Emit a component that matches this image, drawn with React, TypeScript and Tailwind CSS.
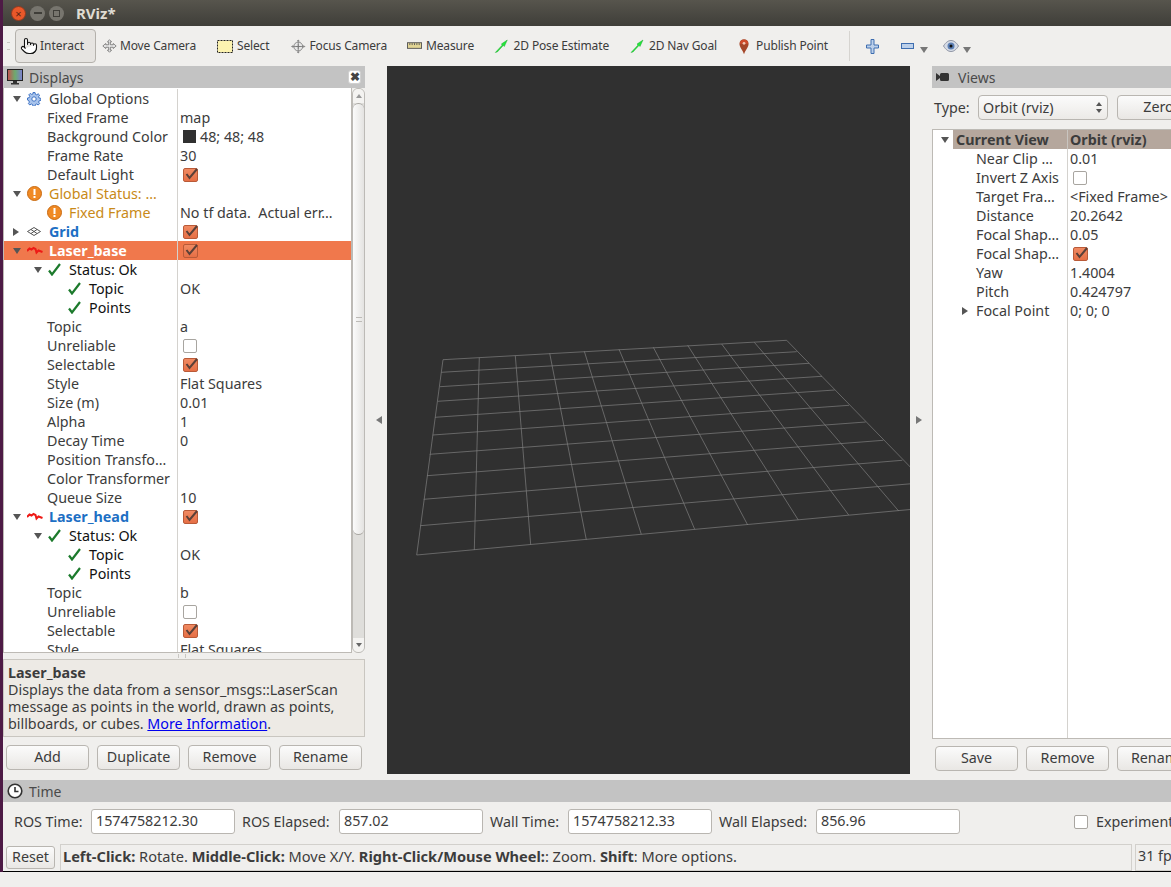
import { Pointer } from 'lucide-react'
import type { ReactNode } from 'react'

const font = "[font-family:'Noto_Sans',sans-serif]"

// measured corners of the grid lines, in canvas coordinates
const topEdge = [[56, 293.7], [92.3, 291.7], [128.3, 289.7], [162.7, 287.3], [197.3, 285.3], [232, 283.3], [266.3, 281.3], [300.7, 279.3], [334.7, 278], [367.3, 276.3], [399.7, 274.3]]
const bottomEdge = [[29.7, 489], [87.3, 484], [143.7, 478.7], [199.3, 473.7], [254.3, 468.3], [307.7, 463.3], [360.7, 459], [411.3, 454], [461.7, 449], [511.7, 445], [561.3, 440]]
const leftEdge = [[56, 293.7], [54.3, 306.3], [53, 320.7], [50.7, 335.3], [48, 351.3], [45.7, 369], [42.7, 388.3], [40, 409.7], [36.7, 433.3], [33.3, 459.7], [29.7, 489]]
const rightEdge = [[399.7, 274.3], [409.7, 285.7], [422, 297.3], [435, 310.3], [447.7, 324], [462, 339.3], [478.7, 356], [496.3, 374.3], [515.3, 394.3], [536.3, 416.7], [561.3, 440]]

function GridLines() {
  return (
    <svg viewBox="0 0 523 708" className="w-full h-full block" fill="none" stroke="#808080" strokeWidth="0.7">
      {topEdge.map((p, i) => (
        <line key={i} x1={p[0]} y1={p[1]} x2={bottomEdge[i][0]} y2={bottomEdge[i][1]} />
      ))}
      {leftEdge.map((p, i) => (
        <line key={i} x1={p[0]} y1={p[1]} x2={rightEdge[i][0]} y2={rightEdge[i][1]} />
      ))}
    </svg>
  )
}

const MoveIcon = () => (
  <svg width="18" height="16" viewBox="0 0 18 16" fill="#e8e8e8" stroke="#666" strokeWidth="0.9">
    <path d="M9 .5l2.5 2.5H10v3.5h3.5V5L17 8l-3.5 3V9.5H10V13h1.500L9 15.500 6.500 13H8V9.500H4.500V11L1 8l3.500-3v1.500H8V3H6.500z" />
  </svg>
)
const SelectIcon = () => (
  <svg width="16" height="13" viewBox="0 0 16 13">
    <rect x=".5" y=".5" width="15" height="12" fill="#fdf3b0" stroke="#222" strokeDasharray="2 1" />
  </svg>
)
const FocusIcon = () => (
  <svg width="17" height="17" viewBox="0 0 18 18" fill="none" stroke="#777" strokeWidth="1">
    <circle cx="9" cy="9" r="5.500" fill="#e6e6e6" />
    <path d="M9 1v16M1 9h16M6 9h6M9 6v6" />
    <path d="M7.500 2.500L9 1l1.500 1.500M7.500 15.500L9 17l1.500-1.500M2.500 7.500L1 9l1.500 1.500M15.500 7.500L17 9l-1.500 1.500" />
  </svg>
)
const RulerIcon = () => (
  <svg width="16" height="8" viewBox="0 0 16 8">
    <rect x=".5" y=".5" width="15" height="6" fill="#e2d595" stroke="#555" />
    <path d="M3 1v2M5.500 1v2M8 1v2M10.500 1v2M13 1v2" stroke="#555" />
  </svg>
)
const ArrowGreen = () => (
  <svg width="15" height="14" viewBox="0 0 14 14">
    <path d="M1 13.500L8 6l-1-1 6-4-3 6.500-1-1L3 13z" fill="#22e83a" stroke="#0d9b1f" strokeWidth=".4" />
  </svg>
)
const PinIcon = () => (
  <svg width="11" height="17" viewBox="0 0 11 17">
    <path d="M5.500 17C4 12 .5 9.500.5 5.500a5 5 0 0110 0C10.500 9.500 7 12 5.500 17z" fill="#a5472a" />
    <path d="M5.500 1a4.500 4.500 0 014.500 4.500H1A4.500 4.500 0 015.500 1z" fill="#cf4c2c" />
    <circle cx="5.500" cy="5" r="1.500" fill="#f3c9b5" />
  </svg>
)
const PlusIcon = () => (
  <svg width="13" height="15" viewBox="0 0 13 15">
    <path d="M5 .5h3v5.500h4.500v3H8v5.500H5V9H.5V6H5z" fill="#bcd0ea" stroke="#3f6eb0" />
  </svg>
)
const MinusIcon = () => (
  <svg width="13" height="6" viewBox="0 0 13 6">
    <rect x=".5" y=".5" width="12" height="5" fill="#bcd0ea" stroke="#3f6eb0" />
  </svg>
)
const EyeIcon = () => (
  <svg width="16" height="12" viewBox="0 0 16 12">
    <path d="M.5 6C3 2 5.500.5 8 .5S13 2 15.500 6C13 10 10.500 11.500 8 11.500S3 10 .5 6z" fill="#d5dbe6" stroke="#8d93a3" />
    <circle cx="8" cy="6" r="3.500" fill="#5c7fb5" />
    <circle cx="8" cy="6" r="1.500" fill="#111" />
  </svg>
)
const Caret = () => (
  <svg width="8" height="6" viewBox="0 0 8 6" className="mt-2"><path d="M0 0h8L4 6z" fill="#777" /></svg>
)
const MonitorIcon = () => (
  <svg width="16" height="16" viewBox="0 0 16 16">
    <defs>
      <linearGradient id="scr" x1="0" x2="1" y1="0" y2="0">
        <stop offset="0" stopColor="#c65050" />
        <stop offset=".5" stopColor="#6dab6d" />
        <stop offset="1" stopColor="#7d7dd6" />
      </linearGradient>
    </defs>
    <rect x=".5" y=".5" width="15" height="11" fill="url(#scr)" stroke="#222" />
    <path d="M6 12h4v2h2v1.500H4V14h2z" fill="#333" />
  </svg>
)
const GearIcon = () => (
  <svg width="14" height="14" viewBox="0 0 14 14" fill="#a9c4ec" stroke="#3f73c4" strokeWidth="1">
    <path d="M6 .5h2l.4 1.800 1.300.5 1.500-1 1.400 1.400-1 1.500.5 1.300 1.800.4v2l-1.800.4-.5 1.300 1 1.500-1.400 1.400-1.500-1-1.300.5-.4 1.800H6l-.4-1.800-1.300-.5-1.500 1-1.400-1.400 1-1.500-.5-1.300L.5 8V6l1.800-.4.500-1.300-1-1.500 1.400-1.400 1.500 1 1.300-.5z" />
    <circle cx="7" cy="7" r="2.200" fill="#fff" />
  </svg>
)
const WarnIcon = () => (
  <svg width="15" height="15" viewBox="0 0 15 15">
    <circle cx="7.500" cy="7.500" r="7" fill="#f08a24" stroke="#c96a10" />
    <rect x="6.500" y="3" width="2" height="6" fill="#fff" />
    <rect x="6.500" y="10" width="2" height="2" fill="#fff" />
  </svg>
)
const GridIcon = () => (
  <svg width="14" height="9" viewBox="0 0 14 9" fill="none" stroke="#444" strokeWidth=".9">
    <path d="M7 .5L13.500 4.500 7 8.500.5 4.500zM4 2.500L10 6.500M10 2.500L4 6.500" />
  </svg>
)
const LaserIcon = () => (
  <svg width="16" height="9" viewBox="0 0 16 9" fill="none" stroke="#ee1a16" strokeWidth="2">
    <path d="M0 5l2.500-2.500 2 1 2-1.500 2 1 1 3.500 2-2 4 1.500" />
  </svg>
)
const CheckIcon = () => (
  <svg width="13" height="13" viewBox="0 0 13 13" fill="none" stroke="#1c7a2c" strokeWidth="2.200">
    <path d="M1 7.500l3 4L12 1" />
  </svg>
)
const CameraIcon = () => (
  <svg width="13" height="8" viewBox="0 0 13 8">
    <path d="M0 0l4 3V1.500A1.500 1.500 0 015.500 0h6A1.500 1.500 0 0113 1.500v5A1.500 1.500 0 0111.500 8h-6A1.500 1.500 0 014 6.500V5l-4 3z" fill="#333" />
  </svg>
)
const ClockIcon = () => (
  <svg width="16" height="16" viewBox="0 0 16 16" fill="#fff" stroke="#333" strokeWidth="1.600">
    <circle cx="8" cy="8" r="6.800" />
    <path d="M8 4v4.500h3.500" fill="none" />
  </svg>
)
const Down = () => (
  <svg width="8" height="6" viewBox="0 0 8 6"><path d="M0 0h8L4 6z" fill="#555" /></svg>
)
const Right = () => (
  <svg width="6" height="8" viewBox="0 0 6 8"><path d="M0 0l6 4-6 4z" fill="#555" /></svg>
)

function Check({ on }: { on: boolean }) {
  return on ? (
    <span className="block w-[15px] h-[14px] rounded-[2px] bg-linear-to-b from-[#f08a62] to-[#e66f45] border border-[#b95a38]">
      <svg width="15" height="14" viewBox="0 0 15 14" fill="none" stroke="#5a4038" strokeWidth="2" className="block -mt-[2px]">
        <path d="M2.500 7l3 4L13 2" />
      </svg>
    </span>
  ) : (
    <span className="block w-[14px] h-[14px] rounded-[2px] bg-white border border-[#a8a5a0]" />
  )
}

type Row = {
  name: string
  indent: string
  arrow?: 'down' | 'right'
  icon?: ReactNode
  iconBox?: string
  value?: string
  check?: boolean
  tone?: string
  selected?: boolean
}

const TOP = 'pl-[8px]'
const D1 = 'pl-[43px]'
const D1A = 'pl-[29px]'
const D2 = 'pl-[64px]'
const statusTone = 'text-[#111111]'
const warnTone = 'text-[#c98a18]'
const blue = 'text-[#1d6fc4] font-bold'

function laserRows(topic: string, okValue: string): Row[] {
  return [
    { name: 'Status: Ok', indent: D1A, arrow: 'down', icon: <CheckIcon />, iconBox: 'w-[21px]', tone: statusTone },
    { name: 'Topic', indent: D2, icon: <CheckIcon />, iconBox: 'w-[21px]', tone: statusTone, value: okValue },
    { name: 'Points', indent: D2, icon: <CheckIcon />, iconBox: 'w-[21px]', tone: statusTone },
    { name: 'Topic', indent: D1, value: topic },
    { name: 'Unreliable', indent: D1, check: false },
    { name: 'Selectable', indent: D1, check: true },
    { name: 'Style', indent: D1, value: 'Flat Squares' },
  ]
}

const displayRows: Row[] = [
  { name: 'Global Options', indent: TOP, arrow: 'down', icon: <GearIcon />, iconBox: 'w-[22px]' },
  { name: 'Fixed Frame', indent: D1, value: 'map' },
  { name: 'Background Color', indent: D1, value: '48; 48; 48' },
  { name: 'Frame Rate', indent: D1, value: '30' },
  { name: 'Default Light', indent: D1, check: true },
  { name: 'Global Status: …', indent: TOP, arrow: 'down', icon: <WarnIcon />, iconBox: 'w-[22px]', tone: warnTone },
  { name: 'Fixed Frame', indent: D1, icon: <WarnIcon />, iconBox: 'w-[22px]', tone: warnTone, value: 'No tf data.  Actual err…' },
  { name: 'Grid', indent: TOP, arrow: 'right', icon: <GridIcon />, iconBox: 'w-[22px]', tone: blue, check: true },
  { name: 'Laser_base', indent: TOP, arrow: 'down', icon: <LaserIcon />, iconBox: 'w-[22px]', tone: 'text-white font-bold', check: true, selected: true },
  ...laserRows('a', 'OK'),
  { name: 'Size (m)', indent: D1, value: '0.01' },
  { name: 'Alpha', indent: D1, value: '1' },
  { name: 'Decay Time', indent: D1, value: '0' },
  { name: 'Position Transfo…', indent: D1 },
  { name: 'Color Transformer', indent: D1 },
  { name: 'Queue Size', indent: D1, value: '10' },
  { name: 'Laser_head', indent: TOP, arrow: 'down', icon: <LaserIcon />, iconBox: 'w-[22px]', tone: blue, check: true },
  ...laserRows('b', 'OK'),
]

const viewRows: Row[] = [
  { name: 'Near Clip …', indent: D1, value: '0.01' },
  { name: 'Invert Z Axis', indent: D1, check: false },
  { name: 'Target Fra…', indent: D1, value: '<Fixed Frame>' },
  { name: 'Distance', indent: D1, value: '20.2642' },
  { name: 'Focal Shap…', indent: D1, value: '0.05' },
  { name: 'Focal Shap…', indent: D1, check: true },
  { name: 'Yaw', indent: D1, value: '1.4004' },
  { name: 'Pitch', indent: D1, value: '0.424797' },
  { name: 'Focal Point', indent: 'pl-[28px]', arrow: 'right', value: '0; 0; 0' },
]

function TreeRow({ row, nameWidth }: { row: Row; nameWidth: string }) {
  return (
    <div className={`flex h-[19px] shrink-0 items-center leading-[19px] ${row.selected ? 'bg-[#f0784c]' : ''}`}>
      <div className={`${nameWidth} h-full flex items-center whitespace-pre border-r border-[#d4d2ce] ${row.indent} ${row.tone ?? 'text-[#3c3c3c]'}`}>
        {row.arrow && (
          <span className="w-[15px] flex items-center pl-[1px]">{row.arrow === 'down' ? <Down /> : <Right />}</span>
        )}
        {row.icon && <span className={`${row.iconBox} flex items-center`}>{row.icon}</span>}
        <span>{row.name}</span>
      </div>
      <div className="flex-1 pl-[2px] flex items-center whitespace-pre text-[#3c3c3c]">
        {row.name === 'Background Color' && <span className="w-[13px] h-[13px] bg-[#303030] ml-[3px] mr-[4px]" />}
        {row.check !== undefined && <span className="ml-[3px]"><Check on={row.check} /></span>}
        {row.value}
      </div>
    </div>
  )
}

function PushButton({ label, width }: { label: string; width: string }) {
  return (
    <button className={`${width} h-[25px] shrink-0 rounded-[4px] border border-[#b9b6b1] bg-linear-to-b from-[#fbfbfb] to-[#e9e7e4] text-[#3c3c3c] text-[14.300px] leading-none`}>
      {label}
    </button>
  )
}

function DockTitle({ icon, title, children }: { icon: ReactNode; title: string; children?: ReactNode }) {
  return (
    <div className="h-[22px] shrink-0 bg-[#c3c3c3] flex items-center pl-[4px] text-[14px] text-[#4a4a4a]">
      <span className="w-[22px] flex items-center">{icon}</span>
      <span>{title}</span>
      {children}
    </div>
  )
}

function ToolItem({ icon, label, className }: { icon: ReactNode; label: string; className: string }) {
  return (
    <div className={`flex items-center whitespace-nowrap text-[12px] tracking-[-0.15px] text-[#3c3c3c] ${className}`}>
      {icon}
      <span>{label}</span>
    </div>
  )
}

function TimeField({ label, value, labelClass }: { label: string; value: string; labelClass: string }) {
  return (
    <>
      <span className={`${labelClass} shrink-0 whitespace-nowrap`}>{label}</span>
      <span className="w-[144px] h-[25px] shrink-0 rounded-[3px] border border-[#b9b6b1] bg-white pl-[4px] leading-[22px] text-[#3c3c3c]">
        {value}
      </span>
    </>
  )
}

export default function App() {
  return (
    <div className={`${font} w-[1171px] h-[887px] overflow-hidden flex bg-[#f0efed] text-[14.300px]`}>
      <div className="w-[3px] h-[872px] bg-[#4d1a45] shrink-0" />
      <div className="w-[1168px] shrink-0 flex flex-col">
        {/* title bar */}
        <div className="h-[26px] shrink-0 bg-linear-to-b from-[#57554d] to-[#3f3e39] flex items-center pl-[8px]">
          <span className="w-[15px] h-[15px] rounded-full bg-[#e9582a] border border-[#8f3a20] flex items-center justify-center text-[11px] leading-none text-[#5c2412]">×</span>
          <span className="w-[15px] h-[15px] ml-[4px] rounded-full bg-[#77756e] flex items-center justify-center">
            <span className="w-[8px] h-[2px] bg-[#3f3e39]" />
          </span>
          <span className="w-[15px] h-[15px] ml-[4px] rounded-full bg-[#77756e] flex items-center justify-center">
            <span className="w-[7px] h-[7px] border border-[#3f3e39]" />
          </span>
          <span className="ml-[12px] text-[15px] font-bold text-[#dfdbd2]">RViz*</span>
        </div>

        {/* toolbar */}
        <div className="h-[40px] shrink-0 flex items-center">
          <div className="w-[3px] h-[8px] ml-[4px] border-y border-[#c9c7c3]" />
          <div className="w-[81px] h-[34px] ml-[5px] rounded-[4px] border border-[#b4b1ac] bg-[#e6e4e1] flex items-center pl-[4px] text-[12px] text-[#3c3c3c]">
            <Pointer size={18} strokeWidth={1.500} fill="#fff" color="#111" />
            <span className="ml-[2px]">Interact</span>
          </div>
          <div className="w-[6px]" />
          <ToolItem className="w-[94px] shrink-0 gap-[3px]" icon={<MoveIcon />} label="Move Camera" />
          <div className="w-[21px]" />
          <ToolItem className="w-[53px] shrink-0 gap-[4px]" icon={<SelectIcon />} label="Select" />
          <div className="w-[21px]" />
          <ToolItem className="w-[96px] shrink-0 gap-[4px]" icon={<FocusIcon />} label="Focus Camera" />
          <div className="w-[20px]" />
          <ToolItem className="w-[67px] shrink-0 gap-[4px]" icon={<RulerIcon />} label="Measure" />
          <div className="w-[20px]" />
          <ToolItem className="w-[115px] shrink-0 gap-[5px]" icon={<ArrowGreen />} label="2D Pose Estimate" />
          <div className="w-[21px]" />
          <ToolItem className="w-[87px] shrink-0 gap-[5px]" icon={<ArrowGreen />} label="2D Nav Goal" />
          <div className="w-[22px]" />
          <ToolItem className="w-[89px] shrink-0 gap-[7px]" icon={<PinIcon />} label="Publish Point" />
          <div className="w-px h-[30px] ml-[21px] bg-[#d6d4d0]" />
          <div className="ml-[16px] flex items-center"><PlusIcon /></div>
          <div className="ml-[22px] flex items-center"><MinusIcon /></div>
          <div className="ml-[6px] flex items-center"><Caret /></div>
          <div className="ml-[15px] flex items-center"><EyeIcon /></div>
          <div className="ml-[4px] flex items-center"><Caret /></div>
        </div>

        {/* main area */}
        <div className="h-[708px] shrink-0 flex">
          <div className="w-[362px] shrink-0 flex flex-col">
            <DockTitle icon={<MonitorIcon />} title="Displays">
              <span className="ml-auto mr-[4px] w-[13px] h-[14px] rounded-[3px] bg-white border border-[#d0d0d0] flex items-center justify-center text-[12px] font-bold leading-none text-[#444]">✖</span>
            </DockTitle>
            <div className="h-[565px] shrink-0 flex">
              <div className="w-[349px] shrink-0 overflow-hidden flex flex-col bg-white border-l border-r border-b border-[#bdbab5] pt-px">
                {displayRows.map((row, i) => (
                  <TreeRow key={i} row={row} nameWidth="w-[174px]" />
                ))}
              </div>
              <div className="w-[13px] shrink-0 flex flex-col items-center rounded-[6px] border border-[#bcbab6] bg-[#dfdedb] overflow-hidden">
                <span className="w-full h-[14px] shrink-0 bg-[#f4f3f1] flex items-center justify-center">
                  <svg width="6" height="4" viewBox="0 0 6 4"><path d="M0 4h6L3 0z" fill="#999" /></svg>
                </span>
                <span className="w-full h-[432px] shrink-0 rounded-[6px] bg-linear-to-r from-[#fbfbfb] to-[#e4e3e1] border-y border-[#a9a7a3] flex items-center justify-center">
                  <span className="w-[6px] h-[5px] border-y border-[#bdbbb7]" />
                </span>
                <span className="flex-1" />
                <span className="w-full h-[14px] shrink-0 bg-[#f4f3f1] flex items-center justify-center">
                  <svg width="6" height="4" viewBox="0 0 6 4"><path d="M0 0h6L3 4z" fill="#666" /></svg>
                </span>
              </div>
            </div>
            <div className="h-[6px] shrink-0 flex items-center justify-center pr-[4px]">
              <span className="w-[8px] h-[4px] border-x border-[#c9c7c3]" />
            </div>
            <div className="h-[78px] shrink-0 bg-[#edeae5] border border-[#c9c6c0] pl-[4px] pt-[4px] leading-[17px] text-[#3c3c3c]">
              <div className="font-bold">Laser_base</div>
              <div>Displays the data from a sensor_msgs::LaserScan</div>
              <div>message as points in the world, drawn as points,</div>
              <div>billboards, or cubes. <span className="text-[#0000ee] underline">More Information</span>.</div>
            </div>
            <div className="flex gap-[8px] pl-[3px] pt-[8px]">
              <PushButton label="Add" width="w-[83px]" />
              <PushButton label="Duplicate" width="w-[83px]" />
              <PushButton label="Remove" width="w-[83px]" />
              <PushButton label="Rename" width="w-[83px]" />
            </div>
          </div>

          <div className="w-[22px] shrink-0 flex items-center justify-center pl-[5px]">
            <svg width="6" height="8" viewBox="0 0 6 8"><path d="M6 0L0 4l6 4z" fill="#777" /></svg>
          </div>

          <div className="w-[523px] shrink-0 bg-[#303030]">
            <GridLines />
          </div>

          <div className="w-[22px] shrink-0 flex items-center justify-center pr-[4px]">
            <svg width="6" height="8" viewBox="0 0 6 8"><path d="M0 0l6 4-6 4z" fill="#777" /></svg>
          </div>

          <div className="w-[400px] shrink-0 flex flex-col">
            <DockTitle icon={<CameraIcon />} title="Views" />
            <div className="h-[41px] shrink-0 flex items-center pl-[2px] pb-[2px] text-[#3c3c3c]">
              <span className="w-[44px] shrink-0">Type:</span>
              <span className="w-[130px] h-[25px] shrink-0 rounded-[4px] border border-[#b9b6b1] bg-linear-to-b from-[#fbfbfb] to-[#eceae7] flex items-center pl-[4px] pr-[5px]">
                Orbit (rviz)
                <span className="ml-auto flex flex-col gap-[3px]">
                  <svg width="6" height="4" viewBox="0 0 6 4"><path d="M0 4h6L3 0z" fill="#555" /></svg>
                  <svg width="6" height="4" viewBox="0 0 6 4"><path d="M0 0h6L3 4z" fill="#555" /></svg>
                </span>
              </span>
              <span className="ml-[9px]">
                <PushButton label="Zero" width="w-[83px]" />
              </span>
            </div>
            <div className="h-[610px] shrink-0 w-full bg-white border border-[#bdbab5] flex flex-col">
              <div className="flex h-[19px] shrink-0 items-center font-bold leading-[19px] text-[#3c3c3c]">
                <span className="w-[20px] pl-[8px] flex items-center"><Down /></span>
                <span className="w-[115px] h-full pl-[3px] bg-[#b5a79d] border-r border-[#c9c5c0]">Current View</span>
                <span className="flex-1 h-full pl-[2px] bg-[#b5a79d]">Orbit (rviz)</span>
              </div>
              <div className="flex-1 flex flex-col">
                {viewRows.map((row, i) => (
                  <TreeRow key={i} row={row} nameWidth="w-[135px]" />
                ))}
                <div className="flex-1 w-[135px] border-r border-[#d4d2ce]" />
              </div>
            </div>
            <div className="flex gap-[8px] pl-[3px] pt-[7px]">
              <PushButton label="Save" width="w-[83px]" />
              <PushButton label="Remove" width="w-[83px]" />
              <PushButton label="Rename" width="w-[83px]" />
            </div>
          </div>
        </div>

        {/* time panel */}
        <div className="h-[6px] shrink-0" />
        <DockTitle icon={<ClockIcon />} title="Time" />
        <div className="h-[41px] shrink-0 flex items-center pl-[11px] pb-[2px] text-[#3c3c3c]">
          <TimeField label="ROS Time:" value="1574758212.30" labelClass="w-[77px]" />
          <TimeField label="ROS Elapsed:" value="857.02" labelClass="w-[97px] ml-[7px]" />
          <TimeField label="Wall Time:" value="1574758212.33" labelClass="w-[78px] ml-[7px]" />
          <TimeField label="Wall Elapsed:" value="856.96" labelClass="w-[97px] ml-[7px]" />
          <span className="ml-[114px] shrink-0"><Check on={false} /></span>
          <span className="ml-[8px] whitespace-nowrap">Experimental</span>
        </div>

        {/* status bar */}
        <div className="h-[28px] shrink-0 flex items-center pl-[3px] text-[#3c3c3c]">
          <button className="w-[49px] h-[23px] shrink-0 rounded-[3px] border border-[#b9b6b1] bg-linear-to-b from-[#fbfbfb] to-[#e9e7e4] leading-none">Reset</button>
          <div className="w-[1072px] h-[27px] ml-[5px] shrink-0 border border-[#d2d0cc] flex items-center pl-[2px] whitespace-pre text-[14.600px]">
            <b>Left-Click:</b> Rotate. <b>Middle-Click:</b> Move X/Y. <b>Right-Click/Mouse Wheel:</b>: Zoom. <b>Shift</b>: More options.
          </div>
          <div className="w-[60px] h-[27px] ml-[3px] shrink-0 border border-[#d2d0cc] pl-[2px] leading-[22px] whitespace-nowrap">31 fps</div>
        </div>
        <div className="h-[2px] shrink-0 bg-black border-b border-[#f0efed]" />
      </div>
    </div>
  )
}
